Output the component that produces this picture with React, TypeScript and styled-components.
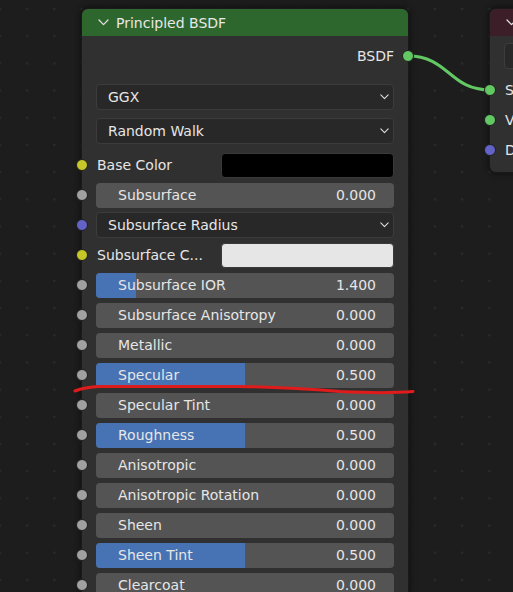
import React from 'react';
import styled, { createGlobalStyle } from 'styled-components';

const GlobalStyle = createGlobalStyle`
  html, body {
    margin: 0;
    padding: 0;
    background: #1d1d1d;
  }
  body {
    font-family: "DejaVu Sans", "Liberation Sans", sans-serif;
    font-size: 14px;
    color: #e6e6e6;
  }
`;

const Canvas = styled.div`
  position: relative;
  width: 513px;
  height: 592px;
  overflow: hidden;
  background-color: #1d1d1d;
  background-image: radial-gradient(circle, #2a2a2a 1.3px, transparent 1.6px);
  background-size: 27.2px 27.2px;
  background-position: -13.6px -4.6px;
`;

const Node = styled.div<{ $left: number; $top: number; $width: number; $height: number }>`
  position: absolute;
  left: ${(p) => p.$left}px;
  top: ${(p) => p.$top}px;
  width: ${(p) => p.$width}px;
  height: ${(p) => p.$height}px;
  background: #303030;
  border-radius: 6px;
  box-shadow: 0 0 0 1px #1a1a1a, 0 0 6px 2px rgba(0, 0, 0, 0.45);
`;

const Header = styled.div<{ $color: string }>`
  height: 27px;
  background: ${(p) => p.$color};
  border-radius: 6px 6px 0 0;
  display: flex;
  align-items: center;
  gap: 7px;
  padding-left: 16px;
  color: #e8e8e8;
  white-space: nowrap;
`;

const Body = styled.div`
  padding: 0 14px;
  display: flex;
  flex-direction: column;
`;

const Row = styled.div`
  position: relative;
  height: 30px;
  display: flex;
  align-items: center;
`;

const OutputRow = styled(Row)`
  margin-top: 5px;
  justify-content: flex-end;
`;

const Socket = styled.span<{ $color: string; $side: 'left' | 'right' }>`
  position: absolute;
  top: 50%;
  ${(p) => (p.$side === 'left' ? 'left: -20px;' : 'right: -20px;')}
  width: 12px;
  height: 12px;
  margin-top: -6px;
  box-sizing: border-box;
  border-radius: 50%;
  background: ${(p) => p.$color};
  border: 1px solid #1e1e1e;
`;

const SelectGroup = styled.div<{ $top: number }>`
  display: flex;
  flex-direction: column;
  gap: 8px;
  margin-top: ${(p) => p.$top}px;
`;

const Select = styled.div`
  flex: 1 1 auto;
  height: 26px;
  box-sizing: border-box;
  background: #282828;
  border: 1px solid #3c3c3c;
  border-radius: 4px;
  display: flex;
  align-items: center;
  justify-content: space-between;
  padding: 0 4px 0 11px;
  color: #e6e6e6;
  white-space: nowrap;
`;

const Inputs = styled.div`
  margin-top: 6px;
  display: flex;
  flex-direction: column;
`;

const Label = styled.span`
  flex: 1;
  padding-left: 1px;
  white-space: nowrap;
  color: #e6e6e6;
`;

const Swatch = styled.div<{ $color: string }>`
  flex: 0 0 173px;
  height: 25px;
  box-sizing: border-box;
  border-radius: 4px;
  background: ${(p) => p.$color};
  border: 1px solid #3a3a3a;
`;

const Slider = styled.div`
  position: relative;
  flex: 1;
  height: 25px;
  background: #545454;
  border-radius: 4px;
  overflow: hidden;
  display: flex;
  align-items: center;
  justify-content: space-between;
  padding: 0 18px 0 22px;
  color: #e6e6e6;
  white-space: nowrap;
`;

const Fill = styled.div`
  position: absolute;
  left: 0;
  top: 0;
  bottom: 0;
  background: #4772b3;
`;

const SliderText = styled.span`
  position: relative;
`;

const Wires = styled.svg`
  position: absolute;
  left: 0;
  top: 0;
  pointer-events: none;
`;

const Chevron: React.FC<{ size?: number }> = ({ size = 11 }) => (
  <svg width={size} height={size * 0.6} viewBox="0 0 11 6.6" fill="none">
    <path d="M1 1 L5.5 5.6 L10 1" stroke="#e0e0e0" strokeWidth="1.3" strokeLinecap="round" strokeLinejoin="round" />
  </svg>
);

const SOCKET_GRAY = '#a1a1a1';
const SOCKET_YELLOW = '#c7c729';
const SOCKET_PURPLE = '#6363c7';
const SOCKET_GREEN = '#63c763';

type Input =
  | { kind: 'color'; label: string; color: string }
  | { kind: 'value'; label: string; value: string; fraction: number }
  | { kind: 'vector'; label: string };

const inputs: Input[] = [
  { kind: 'color', label: 'Base Color', color: '#000000' },
  { kind: 'value', label: 'Subsurface', value: '0.000', fraction: 0 },
  { kind: 'vector', label: 'Subsurface Radius' },
  { kind: 'color', label: 'Subsurface C...', color: '#e6e6e6' },
  { kind: 'value', label: 'Subsurface IOR', value: '1.400', fraction: 0.134 },
  { kind: 'value', label: 'Subsurface Anisotropy', value: '0.000', fraction: 0 },
  { kind: 'value', label: 'Metallic', value: '0.000', fraction: 0 },
  { kind: 'value', label: 'Specular', value: '0.500', fraction: 0.5 },
  { kind: 'value', label: 'Specular Tint', value: '0.000', fraction: 0 },
  { kind: 'value', label: 'Roughness', value: '0.500', fraction: 0.5 },
  { kind: 'value', label: 'Anisotropic', value: '0.000', fraction: 0 },
  { kind: 'value', label: 'Anisotropic Rotation', value: '0.000', fraction: 0 },
  { kind: 'value', label: 'Sheen', value: '0.000', fraction: 0 },
  { kind: 'value', label: 'Sheen Tint', value: '0.500', fraction: 0.5 },
  { kind: 'value', label: 'Clearcoat', value: '0.000', fraction: 0 },
];

const InputRow: React.FC<{ input: Input }> = ({ input }) => {
  if (input.kind === 'color') {
    return (
      <Row>
        <Socket $side="left" $color={SOCKET_YELLOW} />
        <Label>{input.label}</Label>
        <Swatch $color={input.color} />
      </Row>
    );
  }
  if (input.kind === 'vector') {
    return (
      <Row>
        <Socket $side="left" $color={SOCKET_PURPLE} />
        <Select>
          {input.label}
          <Chevron size={9} />
        </Select>
      </Row>
    );
  }
  return (
    <Row>
      <Socket $side="left" $color={SOCKET_GRAY} />
      <Slider>
        <Fill style={{ width: `${input.fraction * 100}%` }} />
        <SliderText>{input.label}</SliderText>
        <SliderText>{input.value}</SliderText>
      </Slider>
    </Row>
  );
};

const OutputLabel = styled.span`
  color: #e6e6e6;
`;

const MaterialOutput: React.FC = () => (
  <Node $left={490} $top={9} $width={200} $height={163}>
    <Header $color="#3b1e28">
      <Chevron />
      Material Output
    </Header>
    <Body>
      <SelectGroup $top={7}>
        <Select>All</Select>
      </SelectGroup>
      <Inputs>
        <Row>
          <Socket $side="left" $color={SOCKET_GREEN} />
          <Label>Surface</Label>
        </Row>
        <Row>
          <Socket $side="left" $color={SOCKET_GREEN} />
          <Label>Volume</Label>
        </Row>
        <Row>
          <Socket $side="left" $color={SOCKET_PURPLE} />
          <Label>Displacement</Label>
        </Row>
      </Inputs>
    </Body>
  </Node>
);

const App: React.FC = () => {
  return (
    <>
      <GlobalStyle />
      <Canvas>
        <Wires width={513} height={592}>
          <path d="M408 56 C 449 56, 449 90, 490 90" stroke="#63c763" strokeWidth="3" fill="none" />
        </Wires>
        <Node $left={82} $top={9} $width={326} $height={700}>
          <Header $color="#2d672d">
            <Chevron />
            Principled BSDF
          </Header>
          <Body>
            <OutputRow>
              <OutputLabel>BSDF</OutputLabel>
              <Socket $side="right" $color={SOCKET_GREEN} />
            </OutputRow>
            <SelectGroup $top={13}>
              <Select>
                GGX
                <Chevron size={9} />
              </Select>
              <Select>
                Random Walk
                <Chevron size={9} />
              </Select>
            </SelectGroup>
            <Inputs>
              {inputs.map((input) => (
                <InputRow key={input.label} input={input} />
              ))}
            </Inputs>
          </Body>
        </Node>
        <MaterialOutput />
        <Wires width={513} height={592}>
          <path
            d="M75 391 C 82 388, 88 387, 100 386.5 L 240 386.5 C 280 387, 310 389, 340 391.5 C 370 393, 395 393, 413 391.5"
            stroke="#e01b1b"
            strokeWidth="3"
            strokeLinecap="round"
            fill="none"
          />
        </Wires>
      </Canvas>
    </>
  );
};

export default App;
